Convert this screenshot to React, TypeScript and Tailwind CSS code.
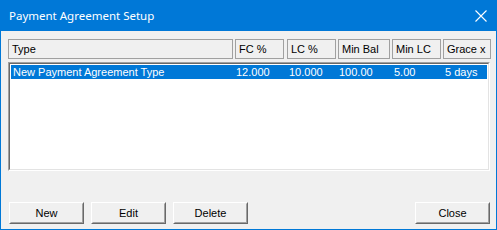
import React from "react";

const cellHeader =
  "h-[20px] border border-[#a0a0a0] bg-[#f0f0f0] pl-[3px] flex items-center leading-none";

function Btn({ label, className = "" }: { label: string; className?: string }) {
  return (
    <div
      className={`w-[75px] h-[22px] border border-t-white border-l-white border-r-[#696969] border-b-[#696969] ${className}`}
    >
      <div className="w-full h-full border border-t-[#f0f0f0] border-l-[#f0f0f0] border-r-[#a0a0a0] border-b-[#a0a0a0] bg-[#f0f0f0] flex items-center justify-center text-black">
        {label}
      </div>
    </div>
  );
}

export default function App() {
  return (
    <div className="w-[497px] h-[230px] bg-[#0078d7] flex flex-col px-[1px] pb-[1px]">
      <div
        className="h-[31px] flex items-center justify-between pl-[8px] pr-[9px] text-white text-[11.5px] shrink-0"
        style={{ fontFamily: '"Noto Sans", sans-serif' }}
      >
        <span className="mt-[1px]">Payment Agreement Setup</span>
        <svg width="12" height="12" viewBox="0 0 12 12" className="mt-[1px]">
          <path d="M0.5 0.5 L11.5 11.5 M11.5 0.5 L0.5 11.5" stroke="white" strokeWidth="1.1" />
        </svg>
      </div>
      <div
        className="flex-1 bg-[#f0f0f0] flex flex-col text-[11px] text-black"
        style={{ fontFamily: '"Liberation Sans", Arial, sans-serif' }}
      >
        <div className="flex mt-[8px] ml-[7px]">
          <div className={`${cellHeader} w-[225px]`}>Type</div>
          <div className={`${cellHeader} w-[49px] ml-[2px]`}>FC %</div>
          <div className={`${cellHeader} w-[49px] ml-[3px]`}>LC %</div>
          <div className={`${cellHeader} w-[52px] ml-[2px]`}>Min Bal</div>
          <div className={`${cellHeader} w-[49px] ml-[2px]`}>Min LC</div>
          <div className={`${cellHeader} w-[48px] ml-[2px]`}>Grace x</div>
        </div>
        <div className="mt-[3px] ml-[7px] w-[482px] h-[109px] border border-t-[#a0a0a0] border-l-[#a0a0a0] border-r-white border-b-white">
          <div className="w-full h-full border border-t-[#696969] border-l-[#696969] border-r-[#e3e3e3] border-b-[#e3e3e3] bg-white pt-[1px] pl-[1px] pr-[1px]">
            <div className="h-[14px] bg-[#0078d7] text-white flex items-center leading-none">
              <div className="w-[225px] pl-[2px]">New Payment Agreement Type</div>
              <div className="w-[53px]">12.000</div>
              <div className="w-[50px]">10.000</div>
              <div className="w-[55px]">100.00</div>
              <div className="w-[51px]">5.00</div>
              <div>5 days</div>
            </div>
          </div>
        </div>
        <div className="flex mt-[31px] ml-[8px]">
          <Btn label="New" />
          <Btn label="Edit" className="ml-[7px]" />
          <Btn label="Delete" className="ml-[7px]" />
          <Btn label="Close" className="ml-auto mr-[6px]" />
        </div>
      </div>
    </div>
  );
}
